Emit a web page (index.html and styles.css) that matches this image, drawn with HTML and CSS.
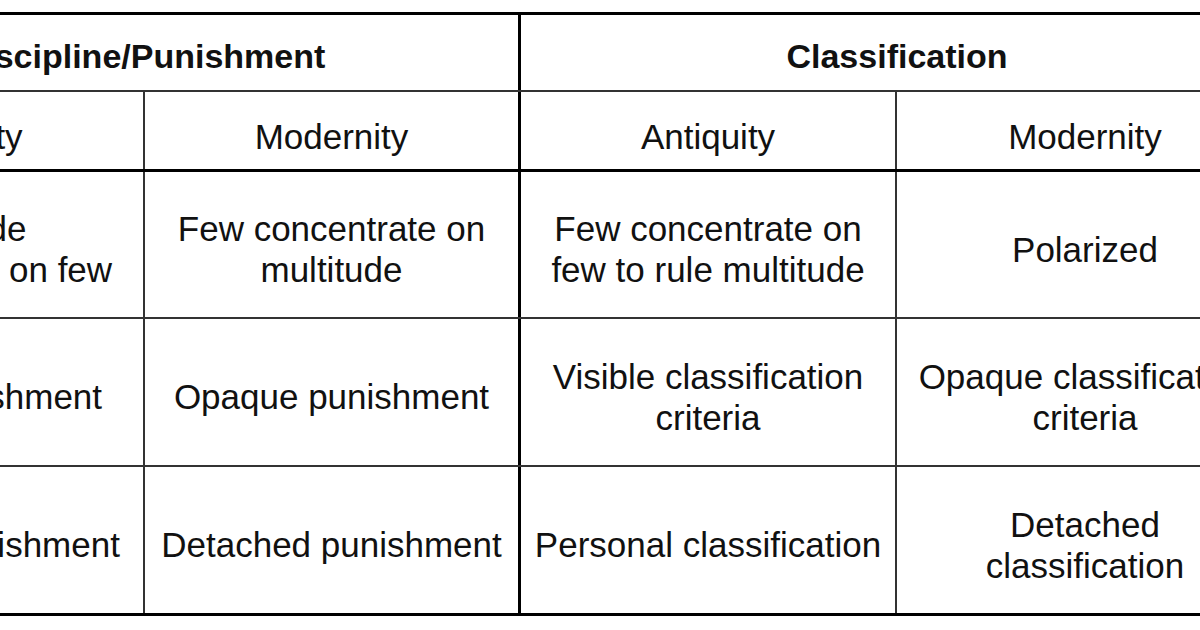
FILE: index.html
```html
<!DOCTYPE html>
<html>
<head>
<meta charset="utf-8">
<link rel="stylesheet" href="styles.css">
</head>
<body>
<div class="sheet">
  <div class="row head">
    <div class="cell span2 thick-r">Discipline/Punishment</div>
    <div class="cell span2">Classification</div>
  </div>
  <div class="row sub">
    <div class="cell thin-r">Antiquity</div>
    <div class="cell thick-r">Modernity</div>
    <div class="cell thin-r">Antiquity</div>
    <div class="cell">Modernity</div>
  </div>
  <div class="row r1">
    <div class="cell thin-r">Multitude concentrates on few</div>
    <div class="cell thick-r">Few concentrate on multitude</div>
    <div class="cell thin-r">Few concentrate on few to rule multitude</div>
    <div class="cell">Polarized</div>
  </div>
  <div class="row r2">
    <div class="cell thin-r">Visible punishment</div>
    <div class="cell thick-r">Opaque punishment</div>
    <div class="cell thin-r">Visible classification criteria</div>
    <div class="cell">Opaque classification criteria</div>
  </div>
  <div class="row r3">
    <div class="cell thin-r">Personal punishment</div>
    <div class="cell thick-r">Detached punishment</div>
    <div class="cell thin-r">Personal classification</div>
    <div class="cell">Detached classification</div>
  </div>
</div>
</body>
</html>
```
FILE: styles.css
```css
html, body {
  margin: 0;
  padding: 0;
  background: #ffffff;
  overflow: hidden;
}

body {
  font-family: "Liberation Sans", Arial, sans-serif;
  color: #111111;
}

.sheet {
  width: 1505px;
  margin-top: 12px;
  margin-left: -232px;
  border-top: 3px solid #000000;
}

.row {
  display: grid;
  grid-template-columns: 377px 376px 376px 376px;
  box-sizing: border-box;
}

.head {
  height: 77px;
  border-bottom: 2px solid #333333;
}

.sub {
  height: 80px;
  border-bottom: 3px solid #000000;
}

.r1 {
  height: 147px;
  border-bottom: 2px solid #333333;
}

.r2 {
  height: 148px;
  border-bottom: 2px solid #333333;
}

.r3 {
  height: 149px;
  border-bottom: 3px solid #000000;
}

.cell {
  box-sizing: border-box;
  display: flex;
  align-items: center;
  justify-content: center;
  text-align: center;
  padding: 9px 13px 0;
  font-size: 35px;
  line-height: 41px;
}

.head .cell {
  font-weight: bold;
  font-size: 34px;
  padding-top: 8px;
}

.sub .cell {
  padding-top: 11px;
}

.span2 {
  grid-column: span 2;
}

.thin-r {
  border-right: 2px solid #333333;
}

.thick-r {
  border-right: 3px solid #000000;
}
```
